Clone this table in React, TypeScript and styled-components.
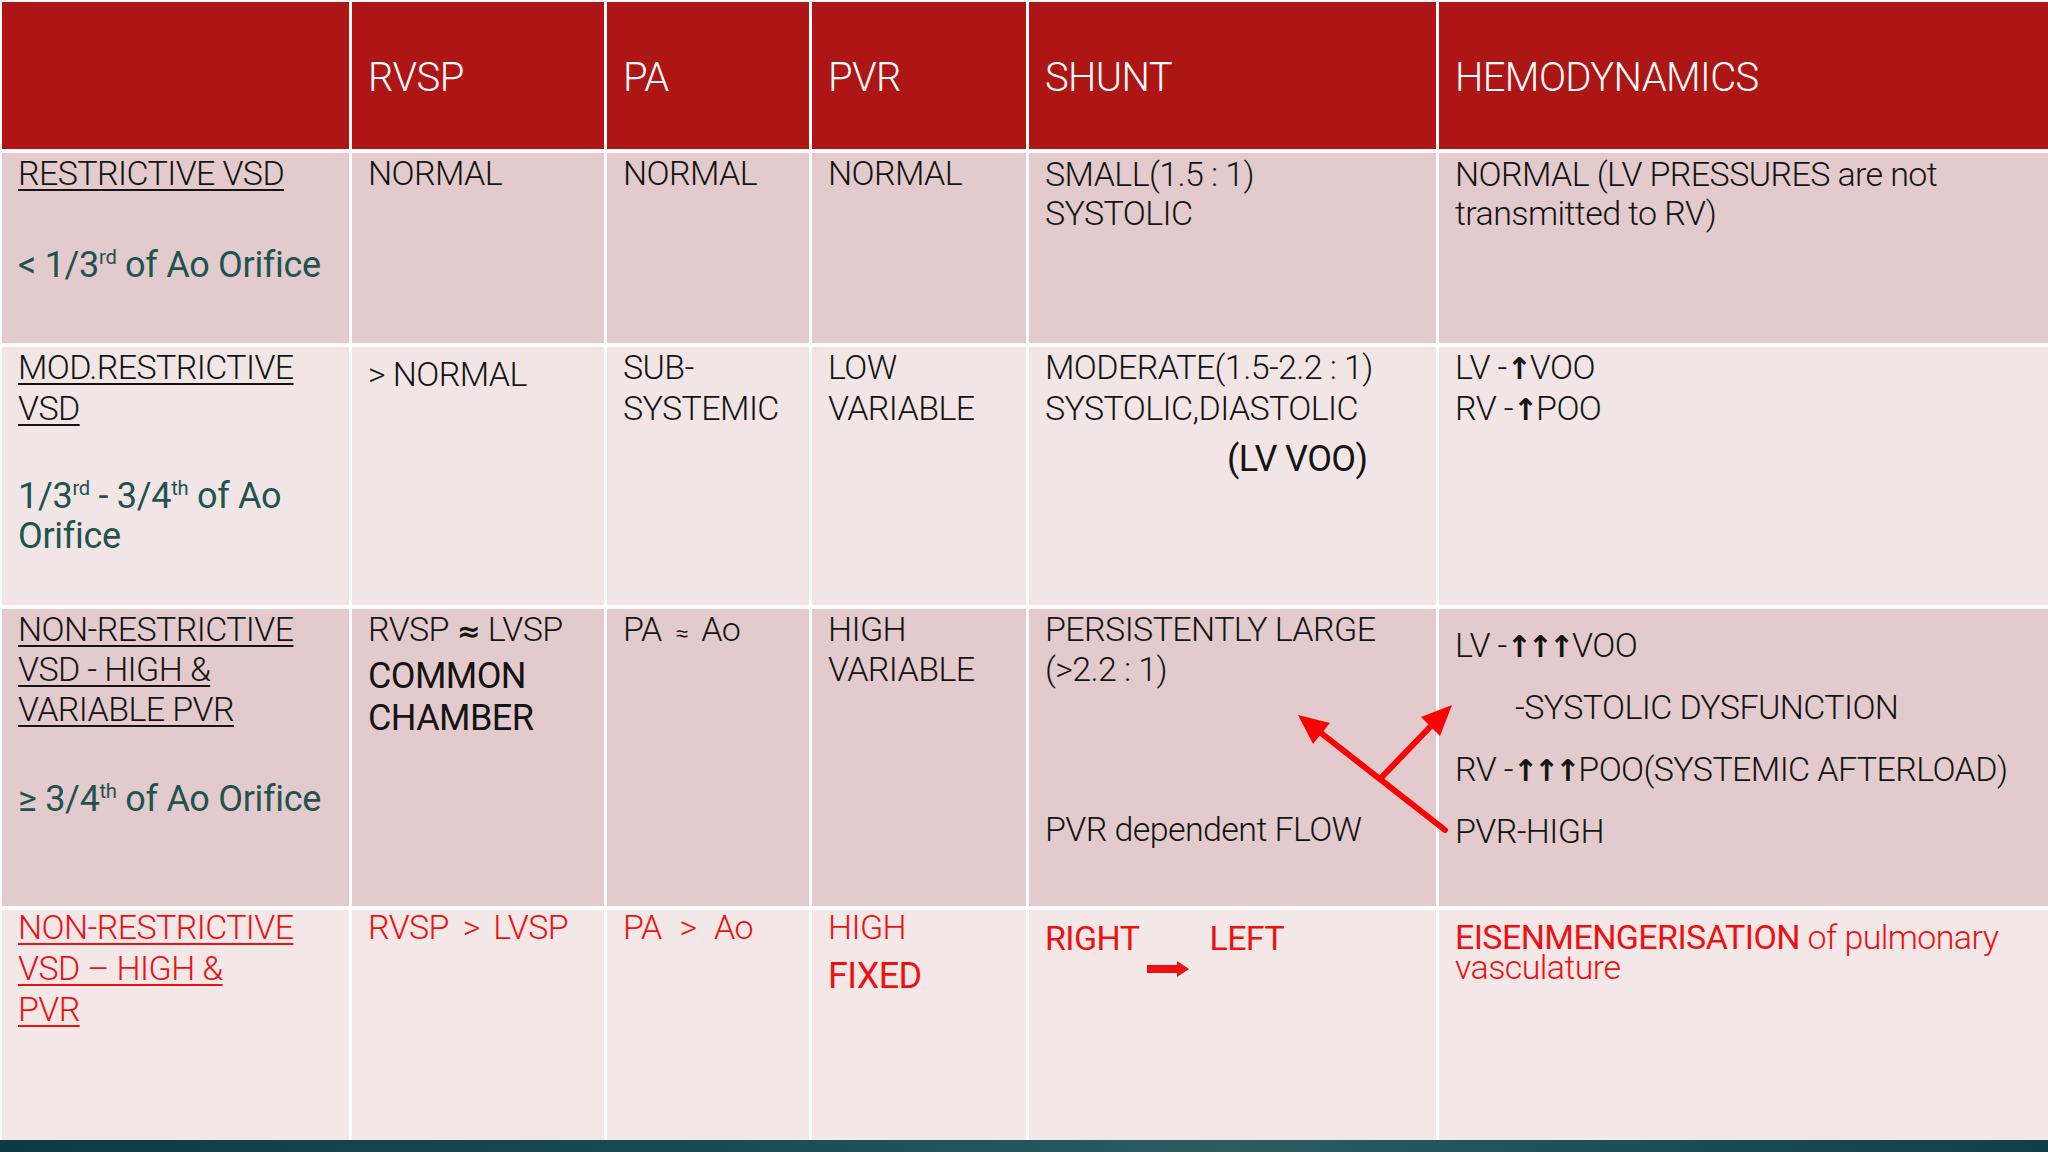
import React from 'react'
import styled, {createGlobalStyle} from 'styled-components'

const GlobalStyle = createGlobalStyle`
  html, body {
    margin: 0;
    padding: 0;
    background: #ffffff;
  }
  body {
    font-family: Roboto, "Liberation Sans", sans-serif;
  }
`

const Page = styled.div`
  width: 2048px;
  height: 1152px;
  display: flex;
  flex-direction: column;
  background: #ffffff;
  overflow: hidden;
`

const Table = styled.div`
  position: relative;
  flex: 1;
  display: grid;
  grid-template-columns: 347px 252px 202px 214px 407px 1fr;
  grid-template-rows: 147px 190px 258px 297px 1fr;
  column-gap: 3px;
  row-gap: 4px;
  padding: 2px 0 0 2px;
  background: #ffffff;
`

const HeadCell = styled.div`
  background: #ae1515;
  color: #ffffff;
  font-size: 40px;
  font-weight: 300;
  line-height: 48px;
  letter-spacing: -0.6px;
  padding: 52px 12px 0 16px;
`

const Cell = styled.div<{$bg: string; $pad?: number}>`
  background: ${({$bg}) => $bg};
  color: #141414;
  font-size: 34px;
  font-weight: 300;
  line-height: 40px;
  letter-spacing: -0.6px;
  padding: ${({$pad}) => $pad ?? 0}px 10px 0 16px;
  white-space: nowrap;
`

const Txt = styled.div<{
  $mt?: number
  $ml?: number
  $lh?: number
  $size?: number
  $weight?: number
  $color?: string
  $ws?: number
}>`
  margin-top: ${({$mt}) => $mt ?? 0}px;
  margin-left: ${({$ml}) => $ml ?? 0}px;
  ${({$lh}) => ($lh ? `line-height: ${$lh}px;` : '')}
  ${({$size}) => ($size ? `font-size: ${$size}px;` : '')}
  ${({$weight}) => ($weight ? `font-weight: ${$weight};` : '')}
  ${({$color}) => ($color ? `color: ${$color};` : '')}
  ${({$ws}) => ($ws ? `word-spacing: ${$ws}px;` : '')}
`

const U = styled.span`
  text-decoration: underline;
  text-decoration-thickness: 2px;
  text-underline-offset: 4px;
`

const Teal = styled(Txt)`
  color: #1f5350;
  font-size: 36px;
  font-weight: 400;
  letter-spacing: -0.3px;
`

const Sup = styled.sup`
  font-size: 56%;
  vertical-align: 0.64em;
  line-height: 0;
`

const Strong = styled.span`
  font-weight: 400;
`

const Up = styled.span`
  font-family: "DejaVu Sans", sans-serif;
  font-weight: 700;
  font-size: 30px;
  line-height: 1;
  letter-spacing: -4px;
  margin-right: 2px;
`

const Approx = styled.span<{$small?: boolean}>`
  font-family: "DejaVu Sans", sans-serif;
  font-size: ${({$small}) => ($small ? '22px' : '28px')};
  font-weight: ${({$small}) => ($small ? 300 : 700)};
  line-height: 1;
  margin: ${({$small}) => ($small ? '0 14px' : '0 8px')};
`

const FlowRow = styled.div`
  display: flex;
  align-items: flex-start;
  margin-top: 8px;
  color: #ee1111;
  font-weight: 400;
`

const FlowArrow = styled.svg`
  margin: 43px 20px 0 8px;
  flex: none;
`

const Overlay = styled.svg`
  position: absolute;
  left: 0;
  top: 0;
  pointer-events: none;
`

const BottomBar = styled.div`
  height: 12px;
  flex: none;
  background: linear-gradient(90deg, #0e3a44 0%, #1c4a52 35%, #2b5c60 60%, #123e48 100%);
`

const ODD = '#e2cacd'
const EVEN = '#f1e5e6'
const LAST = '#f3e7e8'
const RED = '#ee1111'

const App = () => (
  <>
    <GlobalStyle/>
    <Page>
      <Table>
        <HeadCell/>
        <HeadCell>RVSP</HeadCell>
        <HeadCell>PA</HeadCell>
        <HeadCell>PVR</HeadCell>
        <HeadCell>SHUNT</HeadCell>
        <HeadCell>HEMODYNAMICS</HeadCell>

        <Cell $bg={ODD}>
          <Txt><U>RESTRICTIVE VSD</U></Txt>
          <Teal $mt={52}>&lt; 1/3<Sup>rd</Sup> of Ao Orifice</Teal>
        </Cell>
        <Cell $bg={ODD}><Txt>NORMAL</Txt></Cell>
        <Cell $bg={ODD}><Txt>NORMAL</Txt></Cell>
        <Cell $bg={ODD}><Txt>NORMAL</Txt></Cell>
        <Cell $bg={ODD} $pad={2}>
          <Txt $lh={39}>SMALL(1.5 : 1)<br/>SYSTOLIC</Txt>
        </Cell>
        <Cell $bg={ODD} $pad={2}>
          <Txt $lh={39}>NORMAL (LV PRESSURES are not<br/>transmitted to RV)</Txt>
        </Cell>

        <Cell $bg={EVEN}>
          <Txt $lh={41}><U>MOD.RESTRICTIVE<br/>VSD</U></Txt>
          <Teal $mt={47}>1/3<Sup>rd</Sup> - 3/4<Sup>th</Sup> of Ao<br/>Orifice</Teal>
        </Cell>
        <Cell $bg={EVEN}><Txt $mt={7}>&gt; NORMAL</Txt></Cell>
        <Cell $bg={EVEN}><Txt $lh={41}>SUB-<br/>SYSTEMIC</Txt></Cell>
        <Cell $bg={EVEN}><Txt $lh={41}>LOW<br/>VARIABLE</Txt></Cell>
        <Cell $bg={EVEN}>
          <Txt $lh={41}>MODERATE(1.5-2.2 : 1)<br/>SYSTOLIC,DIASTOLIC</Txt>
          <Txt $mt={10} $ml={182} $size={36} $weight={400}>(LV VOO)</Txt>
        </Cell>
        <Cell $bg={EVEN}>
          <Txt $lh={41}>LV -<Up>↑</Up>VOO<br/>RV -<Up>↑</Up>POO</Txt>
        </Cell>

        <Cell $bg={ODD}>
          <Txt $lh={40}><U>NON-RESTRICTIVE<br/>VSD - HIGH &amp;<br/>VARIABLE PVR</U></Txt>
          <Teal $mt={50}>≥ 3/4<Sup>th</Sup> of Ao Orifice</Teal>
        </Cell>
        <Cell $bg={ODD}>
          <Txt>RVSP<Approx>≈</Approx>LVSP</Txt>
          <Txt $mt={6} $lh={42} $size={36} $weight={400}>COMMON<br/>CHAMBER</Txt>
        </Cell>
        <Cell $bg={ODD}><Txt>PA<Approx $small>≈</Approx>Ao</Txt></Cell>
        <Cell $bg={ODD}><Txt $lh={40}>HIGH<br/>VARIABLE</Txt></Cell>
        <Cell $bg={ODD}>
          <Txt $lh={40}>PERSISTENTLY LARGE<br/>(&gt;2.2 : 1)</Txt>
          <Txt $mt={120}>PVR dependent FLOW</Txt>
        </Cell>
        <Cell $bg={ODD} $pad={5}>
          <Txt $lh={62}>LV -<Up>↑↑↑</Up>VOO</Txt>
          <Txt $lh={62} $ml={60}>-SYSTOLIC DYSFUNCTION</Txt>
          <Txt $lh={62}>RV -<Up>↑↑↑</Up>POO(SYSTEMIC AFTERLOAD)</Txt>
          <Txt $lh={62}>PVR-HIGH</Txt>
        </Cell>

        <Cell $bg={LAST}>
          <Txt $mt={-3} $lh={41} $color={RED}><U>NON-RESTRICTIVE<br/>VSD – HIGH &amp;<br/>PVR</U></Txt>
        </Cell>
        <Cell $bg={LAST}><Txt $mt={-3} $ws={6} $color={RED}>RVSP &gt; LVSP</Txt></Cell>
        <Cell $bg={LAST}><Txt $mt={-3} $ws={10} $color={RED}>PA &gt; Ao</Txt></Cell>
        <Cell $bg={LAST}>
          <Txt $mt={-3} $color={RED}>HIGH</Txt>
          <Txt $mt={9} $size={36} $weight={400} $color={RED}>FIXED</Txt>
        </Cell>
        <Cell $bg={LAST}>
          <FlowRow>
            <span>RIGHT</span>
            <FlowArrow width="42" height="16" viewBox="0 0 42 16">
              <path d="M0 4 H30 V0 L42 8 L30 16 V12 H0 Z" fill={RED}/>
            </FlowArrow>
            <span>LEFT</span>
          </FlowRow>
        </Cell>
        <Cell $bg={LAST}>
          <Txt $mt={12} $lh={30} $color={RED}>
            <Strong>EISENMENGERISATION</Strong> of pulmonary<br/>vasculature
          </Txt>
        </Cell>

        <Overlay width="2048" height="1140" viewBox="0 0 2048 1140">
          <g stroke="#ff0000" strokeWidth="6" strokeLinecap="round">
            <line x1="1445" y1="830" x2="1321" y2="733"/>
            <line x1="1380" y1="779" x2="1431" y2="726"/>
          </g>
          <g fill="#ff0000">
            <polygon points="1298,715 1330,723 1313,744"/>
            <polygon points="1452,705 1440,736 1421,717"/>
          </g>
        </Overlay>
      </Table>
      <BottomBar/>
    </Page>
  </>
)

export default App
